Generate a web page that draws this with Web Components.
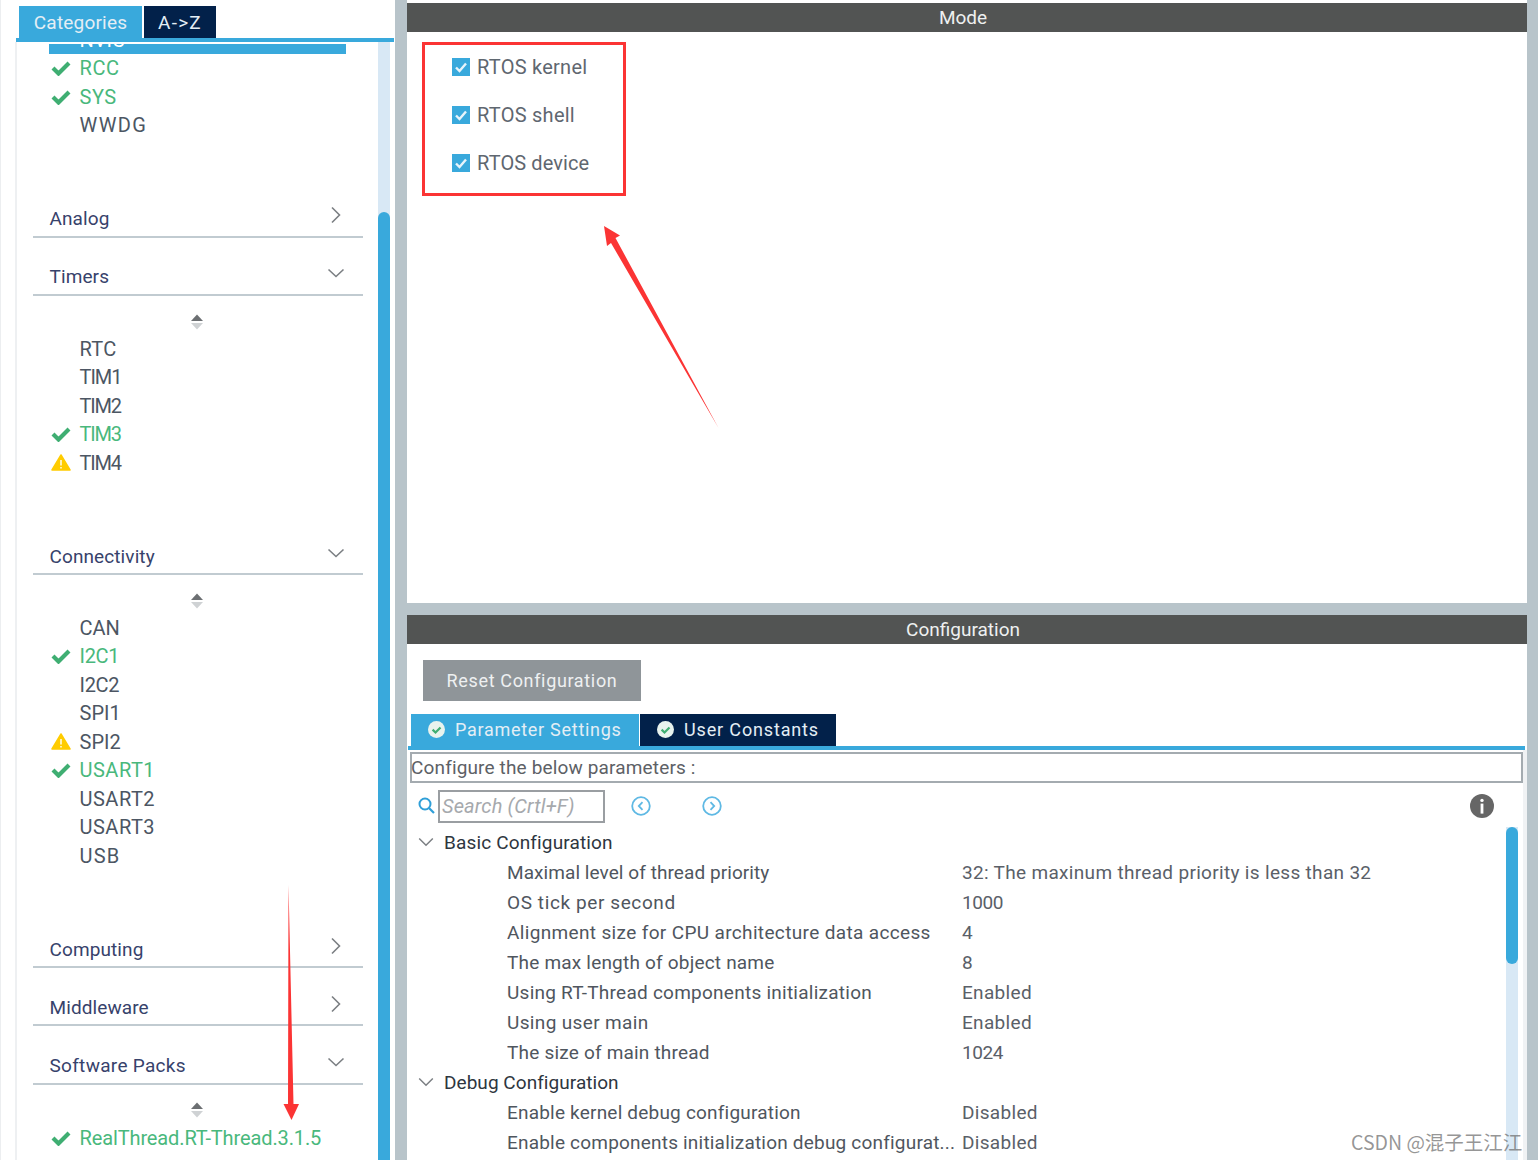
<!DOCTYPE html>
<html>
<head>
<meta charset="utf-8">
<title>Pinout</title>
<style>
  html, body { margin: 0; height: 1160px; overflow: hidden; background: #fff; }
  body { font-family: Roboto, "Liberation Sans", sans-serif; position: relative; }
</style>
</head>
<body>
<cube-app>
  <cube-sidebar slot="side">
    <ip-row state="selected">NVIC</ip-row>
    <ip-row state="ok" style="letter-spacing:.6px">RCC</ip-row>
    <ip-row state="ok" style="letter-spacing:.5px">SYS</ip-row>
    <ip-row style="letter-spacing:1.4px">WWDG</ip-row>
    <cat-header>Analog</cat-header>
    <cat-header tight open>Timers</cat-header>
    <sort-mark></sort-mark>
    <ip-row style="letter-spacing:.3px">RTC</ip-row>
    <ip-row style="letter-spacing:-1px">TIM1</ip-row>
    <ip-row style="letter-spacing:-1.2px">TIM2</ip-row>
    <ip-row state="ok" style="letter-spacing:-1.2px">TIM3</ip-row>
    <ip-row state="warn" style="letter-spacing:-1.2px">TIM4</ip-row>
    <cat-header open>Connectivity</cat-header>
    <sort-mark></sort-mark>
    <ip-row>CAN</ip-row>
    <ip-row state="ok" style="letter-spacing:-.3px">I2C1</ip-row>
    <ip-row style="letter-spacing:-.3px">I2C2</ip-row>
    <ip-row>SPI1</ip-row>
    <ip-row state="warn">SPI2</ip-row>
    <ip-row state="ok" style="letter-spacing:.5px">USART1</ip-row>
    <ip-row style="letter-spacing:.5px">USART2</ip-row>
    <ip-row style="letter-spacing:.5px">USART3</ip-row>
    <ip-row style="letter-spacing:1.2px">USB</ip-row>
    <cat-header>Computing</cat-header>
    <cat-header tight>Middleware</cat-header>
    <cat-header tight open style="letter-spacing:.3px">Software Packs</cat-header>
    <sort-mark></sort-mark>
    <ip-row state="ok" class="last" style="letter-spacing:-.12px">RealThread.RT-Thread.3.1.5</ip-row>
  </cube-sidebar>
  <mode-panel slot="mode">
    <rtos-check>RTOS kernel</rtos-check>
    <rtos-check>RTOS shell</rtos-check>
    <rtos-check style="letter-spacing:.1px">RTOS device</rtos-check>
  </mode-panel>
  <config-panel slot="config">
    <param-row group style="letter-spacing:.15px">Basic Configuration</param-row>
    <param-row value="32: The maxinum thread priority is less than 32" style="letter-spacing:.07px">Maximal level of thread priority</param-row>
    <param-row value="1000" style="letter-spacing:.6px">OS tick per second</param-row>
    <param-row value="4" style="letter-spacing:.35px">Alignment size for CPU architecture data access</param-row>
    <param-row value="8">The max length of object name</param-row>
    <param-row value="Enabled" style="letter-spacing:.25px">Using RT-Thread components initialization</param-row>
    <param-row value="Enabled" style="letter-spacing:.35px">Using user main</param-row>
    <param-row value="1024">The size of main thread</param-row>
    <param-row group>Debug Configuration</param-row>
    <param-row value="Disabled">Enable kernel debug configuration</param-row>
    <param-row value="Disabled">Enable components initialization debug configurat...</param-row>
  </config-panel>
</cube-app>
<screen-notes></screen-notes>

<script>
const BLUE = '#39a9dc'
const NAVY = '#02214a'

class CubeApp extends HTMLElement {
  constructor() {
    super()
    this.attachShadow({ mode: 'open' }).innerHTML = `
      <style>
        :host { display: flex; width: 1538px; height: 1160px; overflow: hidden; background: #fff; }
        .left { width: 395px; flex: none; }
        .split { width: 12px; flex: none; background: #b8c4ca; }
        .main { width: 1120px; flex: none; display: flex; flex-direction: column; padding-top: 3px; box-sizing: border-box; background: #fff; }
        .hsplit { height: 12px; flex: none; background: #b8c4ca; }
        .right { flex: 1; background: #b8c4ca; }
      </style>
      <div class="left"><slot name="side"></slot></div>
      <div class="split"></div>
      <div class="main">
        <slot name="mode"></slot>
        <div class="hsplit"></div>
        <slot name="config"></slot>
      </div>
      <div class="right"></div>
    `
  }
}

class CubeSidebar extends HTMLElement {
  constructor() {
    super()
    this.attachShadow({ mode: 'open' }).innerHTML = `
      <style>
        :host { display: flex; flex-direction: column; height: 1160px; box-sizing: border-box; padding-top: 6px; border-left: 1px solid #eceef0; }
        .tabs { display: flex; gap: 2px; height: 32px; padding-left: 18px; flex: none; }
        .tab { height: 32px; display: flex; align-items: center; justify-content: center; color: #e4eef5; font-size: 19px; box-sizing: border-box; }
        .a { width: 123px; background: ${BLUE}; letter-spacing: .2px; }
        .b { width: 72px; background: ${NAVY}; letter-spacing: 1.2px; }
        .rule { height: 4px; background: ${BLUE}; margin: 0 1px 0 15px; flex: none; }
        .body { flex: 1; min-height: 0; display: flex; margin: 0 4px 0 14px; border-left: 2px solid #eef0f2; overflow: hidden; }
        .list { width: 361px; flex: none; padding-top: 2px; overflow: hidden; box-sizing: border-box; }
        .inner { margin-top: -18.5px; }
        .clip { height: 100%; overflow: hidden; }
        .track { width: 12px; flex: none; background: #d8e8f5; padding-top: 170px; box-sizing: border-box; }
        .thumb { height: 100%; background: ${BLUE}; border-radius: 6px 6px 0 0; }
      </style>
      <div class="tabs"><div class="tab a">Categories</div><div class="tab b">A-&gt;Z</div></div>
      <div class="rule"></div>
      <div class="body">
        <div class="list"><div class="clip"><div class="inner"><slot></slot></div></div></div>
        <div class="track"><div class="thumb"></div></div>
      </div>
    `
  }
}

class IpRow extends HTMLElement {
  constructor() {
    super()
    const state = this.getAttribute('state') || ''
    const icons = {
      ok: `<svg width="20" height="16" viewBox="0 0 20 16"><path d="M2 8l5.500 5.500L18 3" fill="none" stroke="#3fae72" stroke-width="4.200"/></svg>`,
      warn: `<svg width="20" height="17" viewBox="0 0 20 17"><path d="M10 1L19 16H1z" fill="#fc0" stroke="#fc0" stroke-width="1.500" stroke-linejoin="round"/><path d="M10 6v5.500M10 13v1.600" stroke="#fff" stroke-width="1.400"/></svg>`
    }
    this.attachShadow({ mode: 'open' }).innerHTML = `
      <style>
        :host { display: block; height: 28.5px; font-size: 20px; color: #4c5663; }
        :host([state="ok"]) { color: #49b87c; }
        :host(.last) { padding-top: 1px; }
        .row { display: flex; align-items: center; height: 100%; margin-left: 32px; width: 297px; }
        :host([state="selected"]) .row { background: ${BLUE}; color: #fff; }
        .ico { width: 30.5px; flex: none; display: flex; padding-left: 2px; box-sizing: border-box; }
        .txt { white-space: nowrap; }
      </style>
      <div class="row"><span class="ico">${icons[state] || ''}</span><span class="txt"><slot></slot></span></div>
    `
  }
}

class CatHeader extends HTMLElement {
  constructor() {
    super()
    const open = this.hasAttribute('open')
    const chev = open
      ? `<svg width="18" height="12" viewBox="0 0 18 12"><path d="M1.500 2.500L9 9.500l7.500-7" fill="none" stroke="#7b7f83" stroke-width="1.600"/></svg>`
      : `<svg width="12" height="18" viewBox="0 0 12 18"><path d="M2 1.500L9.500 9 2 16.500" fill="none" stroke="#7b7f83" stroke-width="1.600"/></svg>`
    this.attachShadow({ mode: 'open' }).innerHTML = `
      <style>
        :host { display: block; height: 58.2px; margin-top: 40px; font-size: 19px; letter-spacing: .1px; color: #37426b; }
        :host([tight]) { margin-top: 0; }
        .bar { height: 100%; box-sizing: border-box; margin: 0 15px 0 16px; padding: 0 18px 4.5px 16.5px; border-bottom: 2px solid #c1cbd1; display: flex; align-items: flex-end; justify-content: space-between; line-height: 24px; }
        .c { width: 18px; display: flex; justify-content: center; margin-bottom: 7px; }
        :host([open]) .c { margin-bottom: 10px; }
      </style>
      <div class="bar"><span><slot></slot></span><span class="c">${chev}</span></div>
    `
  }
}

class SortMark extends HTMLElement {
  constructor() {
    super()
    this.attachShadow({ mode: 'open' }).innerHTML = `
      <style>
        :host { display: flex; justify-content: center; align-items: center; height: 38.5px; width: 360px; }
        svg { margin-top: 13px; }
      </style>
      <svg width="12" height="16" viewBox="0 0 12 16"><path d="M6 0.5L12 7H0z" fill="#6c6f72"/><path d="M6 15.5L12 9H0z" fill="#cfd2d4"/></svg>
    `
  }
}

class PanelTitle extends HTMLElement {
  constructor() {
    super()
    this.attachShadow({ mode: 'open' }).innerHTML = `
      <style>
        :host { display: flex; align-items: center; justify-content: center; height: 29px; flex: none; padding-right: 8px; background: #525453; color: #eef0f0; font-size: 19px; }
      </style>
      <slot></slot>
    `
  }
}

class ModePanel extends HTMLElement {
  constructor() {
    super()
    this.attachShadow({ mode: 'open' }).innerHTML = `
      <style>
        :host { display: block; height: 600px; background: #fff; }
        .list { display: flex; flex-direction: column; gap: 24px; padding: 23px 0 0 45px; }
      </style>
      <panel-title>Mode</panel-title>
      <div class="list"><slot></slot></div>
    `
  }
}

class RtosCheck extends HTMLElement {
  constructor() {
    super()
    this.attachShadow({ mode: 'open' }).innerHTML = `
      <style>
        :host { display: flex; align-items: center; gap: 7px; height: 24px; font-size: 20px; letter-spacing: .25px; color: #5f6770; }
        svg { flex: none; }
      </style>
      <svg width="18" height="18" viewBox="0 0 18 18"><rect width="18" height="18" fill="${BLUE}"/><path d="M4 9.500l3.500 3.500L14 5.500" fill="none" stroke="#e8f4fb" stroke-width="2.400"/></svg>
      <span><slot></slot></span>
    `
  }
}

class CheckTab extends HTMLElement {
  constructor() {
    super()
    this.attachShadow({ mode: 'open' }).innerHTML = `
      <style>
        :host { display: flex; align-items: center; height: 32px; box-sizing: border-box; padding-bottom: 1px; color: #e4eef5; font-size: 18px; background: ${NAVY}; gap: 10px; padding-left: 17px; width: 196px; letter-spacing: .85px; }
        :host([active]) { background: ${BLUE}; width: 228px; padding-left: 17px; letter-spacing: .72px; }
        svg { flex: none; }
      </style>
      <svg width="17" height="17" viewBox="0 0 17 17"><circle cx="8.500" cy="8.500" r="8.500" fill="#e8f3ee"/><path d="M4.600 8.600l2.900 2.900 5-5" fill="none" stroke="#3fae72" stroke-width="2.200"/></svg>
      <span><slot></slot></span>
    `
  }
}

class ConfigPanel extends HTMLElement {
  constructor() {
    super()
    this.attachShadow({ mode: 'open' }).innerHTML = `
      <style>
        :host { display: flex; flex-direction: column; flex: 1; min-height: 0; background: #fff; overflow: hidden; }
        .reset { width: 218px; height: 41px; margin: 16px 0 13px 16px; background: #8f9599; color: #eef0f1; font-size: 18px; letter-spacing: .65px; display: flex; align-items: center; justify-content: center; flex: none; }
        .tabs { display: flex; gap: 1px; padding-left: 4px; flex: none; }
        .rule { height: 4px; width: 1117px; margin-left: 1px; background: ${BLUE}; flex: none; }
        .rest { flex: 1; min-height: 0; box-sizing: border-box; border-right: 4px solid #f0f2f4; padding-top: 2px; }
        .note { box-sizing: border-box; width: 1113px; height: 31px; margin-left: 3px; border: 2px solid #a4abb0; color: #5d6166; font-size: 19px; letter-spacing: .15px; display: flex; align-items: center; }
        .note span { margin-left: -1px; }
        .tools { position: relative; height: 44px; display: flex; align-items: center; }
        .mag { margin-left: 11px; flex: none; }
        .search { box-sizing: border-box; width: 167px; height: 33px; margin: 2px 0 0 3px; border: 2px solid #9a9ea2; color: #a6a9ad; font-size: 20px; letter-spacing: .15px; font-style: italic; display: flex; align-items: center; padding-left: 2px; white-space: nowrap; }
        .nav { flex: none; margin-top: 1px; }
        .prev { margin-left: 26px; }
        .next { margin-left: 51px; }
        .info { position: absolute; left: 1063px; top: 11px; }
        .lower { display: flex; }
        .rows { width: 1099px; flex: none; }
        .track { width: 12px; flex: none; background: #d8e8f5; height: 400px; }
        .thumb { height: 137px; background: ${BLUE}; border-radius: 6px; }
      </style>
      <panel-title>Configuration</panel-title>
      <div class="reset">Reset Configuration</div>
      <div class="tabs"><check-tab active>Parameter Settings</check-tab><check-tab>User Constants</check-tab></div>
      <div class="rule"></div>
      <div class="rest">
        <div class="note"><span>Configure the below parameters :</span></div>
        <div class="tools">
          <svg class="mag" width="17" height="17" viewBox="0 0 17 17"><circle cx="7" cy="7" r="5.500" fill="none" stroke="#2f9fd8" stroke-width="2"/><path d="M11 11l5 5" stroke="#2f9fd8" stroke-width="2.200"/></svg>
          <div class="search">Search (Crtl+F)</div>
          <svg class="nav prev" width="20" height="20" viewBox="0 0 20 20"><circle cx="10" cy="10" r="8.800" fill="none" stroke="#5fb9e4" stroke-width="1.800"/><path d="M11.500 6.200L7.800 10l3.700 3.800" fill="none" stroke="#5fb9e4" stroke-width="1.800"/></svg>
          <svg class="nav next" width="20" height="20" viewBox="0 0 20 20"><circle cx="10" cy="10" r="8.800" fill="none" stroke="#5fb9e4" stroke-width="1.800"/><path d="M8.500 6.200L12.200 10l-3.700 3.800" fill="none" stroke="#5fb9e4" stroke-width="1.800"/></svg>
          <svg class="info" width="24" height="24" viewBox="0 0 24 24"><circle cx="12" cy="12" r="12" fill="#666"/><rect x="10.600" y="9.600" width="2.800" height="10" fill="#fff"/><circle cx="12" cy="6.400" r="1.700" fill="#fff"/></svg>
        </div>
        <div class="lower">
          <div class="rows"><slot></slot></div>
          <div class="track"><div class="thumb"></div></div>
        </div>
      </div>
    `
  }
}

class ParamRow extends HTMLElement {
  constructor() {
    super()
    const value = this.getAttribute('value') || ''
    const group = this.hasAttribute('group')
    const digits = /^\d+$/.test(value)
    this.attachShadow({ mode: 'open' }).innerHTML = `
      <style>
        :host { display: flex; align-items: center; height: 30px; font-size: 19px; color: #4f565e; letter-spacing: .2px; white-space: nowrap; }
        :host([group]) { color: #2e3640; letter-spacing: .05px; }
        .chev { width: 26px; margin-left: 11px; display: flex; flex: none; }
        .label { width: 455px; margin-left: 100px; flex: none; overflow: hidden; }
        :host([group]) .label { margin-left: 0; }
        .value { color: #5a6068; letter-spacing: ${digits ? '-.4px' : '.32px'}; }
      </style>
      ${group ? `<span class="chev"><svg width="16" height="10" viewBox="0 0 16 10"><path d="M1.200 1.500L8 8.200l6.800-6.700" fill="none" stroke="#7b7f83" stroke-width="1.500"/></svg></span>` : ''}
      <span class="label"><slot></slot></span>
      <span class="value">${value}</span>
    `
  }
}

class ScreenNotes extends HTMLElement {
  constructor() {
    super()
    // red annotations and the watermark lie over the screenshot, so they are absolute
    this.attachShadow({ mode: 'open' }).innerHTML = `
      <style>
        :host { position: absolute; inset: 0; display: block; pointer-events: none; }
        .box { position: absolute; left: 422px; top: 42px; width: 204px; height: 154px; box-sizing: border-box; border: 3px solid #fb3434; }
        svg { position: absolute; left: 0; top: 0; }
        .mark { position: absolute; left: 1351px; top: 1127px; font: 19.5px "Noto Sans CJK SC", "Liberation Sans", sans-serif; color: rgba(110,110,110,.72); white-space: nowrap; }
      </style>
      <div class="box"></div>
      <svg width="1538" height="1160" viewBox="0 0 1538 1160">
        <path d="M604 226L620 235.500 615.500 238 718.500 428 611 243 607 246z" fill="#fb3434"/>
        <path d="M288.500 885L293.500 1104 299 1104 291.500 1120 283.500 1104 288 1104z" fill="#fb3434"/>
      </svg>
      <div class="mark">CSDN @混子王江江</div>
    `
  }
}

customElements.define('cube-app', CubeApp)
customElements.define('cube-sidebar', CubeSidebar)
customElements.define('ip-row', IpRow)
customElements.define('cat-header', CatHeader)
customElements.define('sort-mark', SortMark)
customElements.define('panel-title', PanelTitle)
customElements.define('mode-panel', ModePanel)
customElements.define('rtos-check', RtosCheck)
customElements.define('check-tab', CheckTab)
customElements.define('config-panel', ConfigPanel)
customElements.define('param-row', ParamRow)
customElements.define('screen-notes', ScreenNotes)
</script>
</body>
</html>
